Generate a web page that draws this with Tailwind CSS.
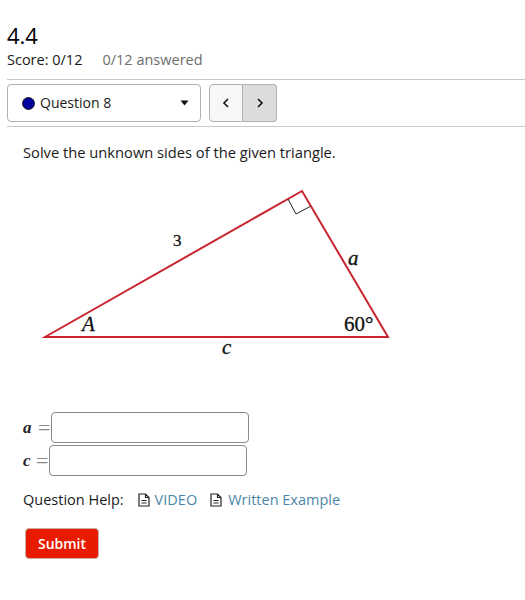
<!DOCTYPE html>
<html lang="en">
  <head>
    <meta charset="UTF-8" />
    <title>4.4</title>
    <script src="https://cdn.jsdelivr.net/npm/@tailwindcss/browser@4"></script>
  </head>
  <body class="bg-white font-['Open_Sans',sans-serif] text-[#1a1a1a]">
    <div class="pl-[7px]">
      <h1 class="pt-[20px] text-[22px] leading-[30px] text-black">4.4</h1>
      <div class="flex text-[14.5px] leading-[19px]">
        <span>Score: 0/12</span>
        <span class="ml-[20px] text-[#6e6e6e]">0/12 answered</span>
      </div>
      <div class="mt-[10px] border-t border-b border-[#c8c8c8] h-[48px] flex items-center gap-2">
        <div class="w-[194px] h-[38px] border border-[#b0b0b0] rounded flex items-center pl-[14px] pr-[11px] text-[14px] text-[#1a1a1a]">
          <span class="w-[13px] h-[13px] rounded-full bg-[#00009c] border border-[#222] mr-[5px]"></span>
          <span class="flex-1 pb-[2px]">Question 8</span>
          <svg width="9" height="6" viewBox="0 0 9 6"><path d="M0.5 0.5h8L4.5 5.5z" fill="#111" /></svg>
        </div>
        <div class="flex h-[38px]">
          <button class="w-[34px] border border-[#b0b0b0] rounded-l bg-[#f7f7f7] flex items-center justify-center">
            <svg width="8" height="12" viewBox="0 0 8 12"><path d="M6 2L2 6l4 4" fill="none" stroke="#111" stroke-width="1.6" /></svg>
          </button>
          <button class="w-[34px] border border-l-0 border-[#b0b0b0] rounded-r bg-[#dcdcdc] flex items-center justify-center">
            <svg width="8" height="12" viewBox="0 0 8 12"><path d="M2 2l4 4-4 4" fill="none" stroke="#111" stroke-width="1.6" /></svg>
          </button>
        </div>
      </div>
    </div>

    <div class="px-[23px]">
      <p class="mt-[15px] text-[14.7px] leading-[20px] text-[#1a1a1a]">Solve the unknown sides of the given triangle.</p>

      <svg class="mt-[20px] -ml-[23px] block" width="525" height="185" viewBox="0 182 525 185">
        <path d="M45 337L302 191L388 337Z" fill="none" stroke="#c9252f" stroke-width="2" />
        <path d="M288 199L296 214L311 206" fill="none" stroke="#222" stroke-width="1" />
        <g font-family="Liberation Serif, serif" fill="#111" stroke="#111" stroke-width="0.3">
          <text x="173" y="246" font-size="17">3</text>
          <text x="348" y="265" font-size="21" font-style="italic">a</text>
          <text x="82" y="331" font-size="21" font-style="italic">A</text>
          <text x="344" y="331" font-size="21">60°</text>
          <text x="222" y="354" font-size="21" font-style="italic">c</text>
        </g>
      </svg>

      <div class="mt-[45px] flex items-center h-[31px]">
        <span class="font-['Liberation_Serif',serif] italic font-semibold text-[17px] w-[15px] text-[#222]">a</span>
        <span class="font-['Liberation_Serif',serif] text-[#888] text-[22px] w-[13px]">=</span>
        <div class="w-[198px] h-[31px] border border-[#8a8a8a] rounded bg-white"></div>
      </div>
      <div class="mt-[2px] flex items-center h-[31px]">
        <span class="font-['Liberation_Serif',serif] italic font-semibold text-[17px] w-[13px] text-[#222]">c</span>
        <span class="font-['Liberation_Serif',serif] text-[#888] text-[22px] w-[13px]">=</span>
        <div class="w-[198px] h-[31px] border border-[#8a8a8a] rounded bg-white"></div>
      </div>

      <div class="mt-[14px] flex items-center text-[14.5px] leading-[20px]">
        <span>Question Help:</span>
        <svg class="ml-[14px]" width="12" height="14" viewBox="0 0 12 14"><path d="M1 1h6.500L11 4.500V13H1zM7.500 1v3.500H11M3.500 7.500h5M3.500 10h5" fill="none" stroke="#222" stroke-width="1.200" /></svg>
        <a class="ml-[5px] text-[#4c87a8]">VIDEO</a>
        <svg class="ml-[13px]" width="12" height="14" viewBox="0 0 12 14"><path d="M1 1h6.500L11 4.500V13H1zM7.500 1v3.500H11M3.500 7.500h5M3.500 10h5" fill="none" stroke="#222" stroke-width="1.200" /></svg>
        <a class="ml-[6px] text-[#4c87a8]">Written Example</a>
      </div>

      <button class="mt-[18px] ml-[3px] -translate-x-px w-[74px] h-[31px] bg-[#e81a00] border border-[#c9b0a8] rounded text-white text-[14px] font-semibold">Submit</button>
    </div>
  </body>
</html>
